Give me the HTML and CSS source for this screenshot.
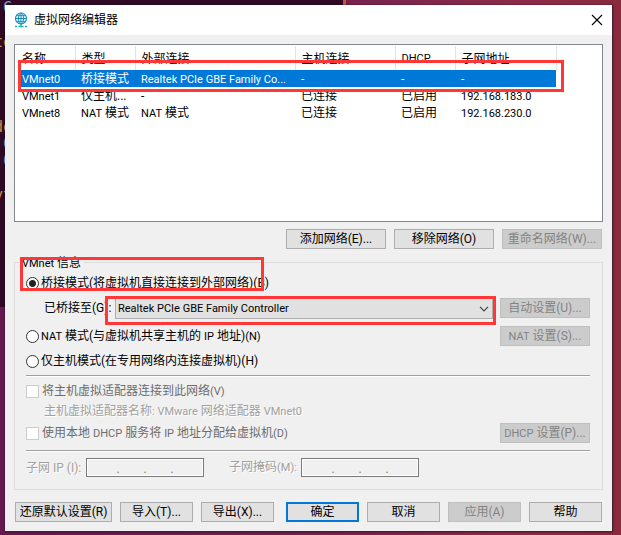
FILE: index.html
```html
<!DOCTYPE html>
<html lang="zh-CN">
<head>
<meta charset="utf-8">
<title>虚拟网络编辑器</title>
<link rel="stylesheet" href="styles.css">
</head>
<body>
<div class="terminal" aria-hidden="true"><pre> <b>C</b>

<i>te</i>


<i> )</i>

<i>de</i>
 <b>C</b>
 <b>C</b>

<i>y</i><b>t</b></pre></div>
<main class="dialog">
  <header class="titlebar">
    <svg class="globe" width="14" height="16" viewBox="0 0 14 16" fill="none" stroke="#1590bd">
      <circle cx="7" cy="6.5" r="5.5" stroke-width="1.2"/>
      <ellipse cx="7" cy="6.5" rx="2.6" ry="5.5"/>
      <path d="M1.5 6.5h11M2.4 3.7h9.2M2.4 9.3h9.2M7 1v13"/>
      <path d="M1 14.5h2M4.500 14.500h5M11 14.500h2" stroke="#16b79b" stroke-width="1.400"/>
    </svg>
    <h1>虚拟网络编辑器</h1>
    <button class="close" aria-label="关闭"><svg width="12" height="12" viewBox="0 0 12 12" stroke="#000" stroke-width="1.100"><path d="M1 1l10 10M11 1L1 11"/></svg></button>
  </header>
  <div class="content">
    <div class="list">
      <table>
        <colgroup><col class="c-name"><col class="c-type"><col class="c-ext"><col class="c-host"><col class="c-dhcp"><col class="c-addr"></colgroup>
        <thead><tr><th>名称</th><th>类型</th><th>外部连接</th><th>主机连接</th><th><span class="en">DHCP</span></th><th>子网地址</th></tr></thead>
        <tbody>
          <tr class="selected"><td><span class="en">VMnet0</span></td><td>桥接模式</td><td><span class="en">Realtek PCIe GBE Family Co...</span></td><td>-</td><td>-</td><td>-</td></tr>
          <tr><td><span class="en">VMnet1</span></td><td>仅主机...</td><td>-</td><td>已连接</td><td>已启用</td><td><span class="en">192.168.183.0</span></td></tr>
          <tr><td><span class="en">VMnet8</span></td><td><span class="en">NAT</span> 模式</td><td><span class="en">NAT</span> 模式</td><td>已连接</td><td>已启用</td><td><span class="en">192.168.230.0</span></td></tr>
        </tbody>
      </table>
      <div class="mark mark-row"></div>
    </div>
    <div class="list-actions">
      <button>添加网络(E)...</button>
      <button>移除网络(O)</button>
      <button disabled>重命名网络(W)...</button>
    </div>
    <fieldset>
      <legend><span class="en">VMnet</span> 信息</legend>
      <label class="row bridged"><input type="radio" name="mode" checked><span>桥接模式(将虚拟机直接连接到外部网络)(B)</span></label>
      <div class="row adapter">
        <label for="adapter">已桥接至(G):</label>
        <div class="select-box">
          <select id="adapter"><option>Realtek PCIe GBE Family Controller</option></select>
          <svg class="chevron" width="10" height="6" viewBox="0 0 10 6" fill="none" stroke="#444" stroke-width="1.200"><path d="M1 .8l4 4 4-4"/></svg>
          <div class="mark mark-select"></div>
        </div>
        <button class="side" disabled>自动设置(U)...</button>
      </div>
      <div class="row nat">
        <label><input type="radio" name="mode"><span><span class="en">NAT</span> 模式(与虚拟机共享主机的 <span class="en">IP</span> 地址)<span class="en">(N)</span></span></label>
        <button class="side" disabled><span class="en">NAT</span> 设置(S)...</button>
      </div>
      <label class="row host"><input type="radio" name="mode"><span>仅主机模式(在专用网络内连接虚拟机)(H)</span></label>
      <hr>
      <label class="row dim"><input type="checkbox" disabled><span>将主机虚拟适配器连接到此网络<span class="en">(V)</span></span></label>
      <p class="row faint note"><span>主机虚拟适配器名称<span class="en">: VMware</span> 网络适配器 <span class="en">VMnet0</span></span></p>
      <div class="row dhcp">
        <label class="dim"><input type="checkbox" disabled><span>使用本地 <span class="en">DHCP</span> 服务将 <span class="en">IP</span> 地址分配给虚拟机<span class="en">(D)</span></span></label>
        <button class="side" disabled><span class="en">DHCP</span> 设置(P)...</button>
      </div>
      <hr class="second">
      <div class="ip-row faint">
        <label for="subnet">子网 IP (I):</label>
        <input id="subnet" type="text" value=".        .        ." disabled>
        <label class="mask-label" for="mask">子网掩码<span class="en">(M):</span></label>
        <input id="mask" type="text" value=".        .        ." disabled>
      </div>
      <div class="mark mark-mode"></div>
    </fieldset>
    <footer>
      <button class="wide">还原默认设置(R)</button>
      <button>导入(T)...</button>
      <button>导出(X)...</button>
      <button class="primary">确定</button>
      <button>取消</button>
      <button disabled>应用(A)</button>
      <button>帮助</button>
    </footer>
  </div>
</main>
</body>
</html>
```
FILE: styles.css
```css
* { box-sizing: border-box; }
html, body { height: 100%; }
body {
  margin: 0;
  padding: 5px 8px 3px 5px;
  overflow: hidden;
  position: relative;
  background: linear-gradient(90deg, #65194f 0%, #6f2050 45%, #8d2c48 85%, #8b293f 100%);
  color: #000;
  font: 12px/16px Roboto, "Noto Sans CJK SC", sans-serif;
}
button, input, select { font: inherit; color: inherit; margin: 0; }
.en { font-size: 11px; }

.terminal {
  position: absolute;
  left: 0;
  top: 0;
  width: 346px;
  height: 307px;
  background: #300a24;
  border-right: 3px solid #bd5a3c;
  overflow: hidden;
}
.terminal pre {
  margin: 0 0 0 -6px;
  color: #cfc8d4;
  font: 15px/17px "DejaVu Sans Mono", monospace;
}
.terminal b { color: #7ea2d6; font-weight: normal; }
.terminal i { color: #d08848; font-style: normal; }

.dialog {
  position: relative;
  display: flex;
  flex-direction: column;
  min-height: 100%;
  background: #f0f0f0;
  border-right: 1px solid #45202f;
  border-bottom: 1px solid #45202f;
  box-shadow: 0 0 2px #00000080;
}
.titlebar {
  display: flex;
  align-items: center;
  height: 30px;
  padding: 0 9px;
  background: #fff;
}
.titlebar h1 {
  flex: 1;
  margin: 0 0 0 6px;
  font-size: 12px;
  font-weight: normal;
}
.close {
  display: flex;
  align-items: center;
  padding: 0;
  border: 0;
  background: none;
}
.content {
  flex: 1;
  display: flex;
  flex-direction: column;
  padding: 9px;
}

.list {
  position: relative;
  flex: 1;
  border: 1px solid #828790;
  background: #fff;
}
table {
  table-layout: fixed;
  width: 536px;
  margin: 1px 0 0 5px;
  border-collapse: collapse;
}
.c-name { width: 55px; }
.c-type { width: 60px; }
.c-ext { width: 160px; }
.c-host { width: 100px; }
.c-dhcp { width: 60px; }
.c-addr { width: 101px; }
th, td {
  padding: 1px 0 0 6px;
  font-weight: normal;
  text-align: left;
  white-space: nowrap;
  overflow: hidden;
}
th { height: 24px; padding-top: 1px; border-right: 1px solid #e2e2e2; }
td { height: 17px; line-height: 15px; }
th:first-child, td:first-child { padding-left: 2px; }
.selected { background: #0078d7; color: #fff; }

.mark {
  position: absolute;
  border: 3px solid #ff3737;
  pointer-events: none;
}
.mark-row { left: 3px; top: 15px; width: 546px; height: 32px; }
.mark-mode { left: 5px; top: -13px; width: 244px; height: 34px; }
.mark-select { left: -10px; right: -3px; top: -2px; height: 29px; }

button {
  height: 20px;
  padding: 0;
  border: 1px solid #adadad;
  border-radius: 0;
  background: #e1e1e1;
  line-height: 16px;
  white-space: nowrap;
}
button:disabled {
  border-color: #bfbfbf;
  background: #ccc;
  color: #838383;
}
.list-actions {
  display: flex;
  justify-content: flex-end;
  gap: 8px;
  margin: 7px 1px 5px 0;
}
.list-actions button { width: 100px; }

fieldset {
  position: relative;
  margin: 0;
  padding: 3px 12px 12px 11px;
  border: 1px solid #dcdcdc;
  min-width: 0;
}
legend {
  height: 16px;
  margin-left: -5px;
  padding: 1px 3px 0 1px;
}
.row { display: flex; align-items: center; height: 20px; }
.row label { display: flex; align-items: center; flex: 1; }
.side { width: 90px; }
input[type="radio"], input[type="checkbox"] {
  appearance: none;
  flex: none;
  width: 13px;
  height: 13px;
  margin-right: 2px;
  border: 1px solid #333;
  background: #fff;
}
input[type="radio"] { border-radius: 50%; }
input[type="radio"]:checked { background: radial-gradient(circle, #222 0 3px, #fff 4px); }
input[type="checkbox"] { margin-right: 3px; border-color: #ccc; }

.adapter { margin: 5px 0 8px; padding-left: 18px; }
.row.adapter label { flex: 0 0 71px; }
.select-box { position: relative; flex: 1; margin-right: 7px; }
select {
  appearance: none;
  display: block;
  width: 100%;
  height: 21px;
  padding: 2px 20px 0 2px;
  border: 1px solid #adadad;
  border-radius: 0;
  background: #e1e1e1;
  font-size: 11px;
}
.chevron { position: absolute; right: 4px; top: 8px; }
.host { margin: 5px 0 4px; }
hr {
  height: 2px;
  margin: 0 0 4px;
  border: 0;
  border-top: 1px solid #a0a0a0;
  border-bottom: 1px solid #fff;
}
.dim { color: #6d6d6d; }
.faint { color: #a0a0a0; text-shadow: 1px 1px #fff; }
.note { margin: 0 0 2px; padding-left: 18px; }
.second { margin: 7px 0 6px; }
.ip-row {
  display: grid;
  grid-template-columns: 60px 118px 97px 118px;
  align-items: center;
}
.mask-label { padding-left: 25px; }
.ip-row input {
  width: 118px;
  height: 19px;
  padding: 2px 0 0;
  border: 1px solid #7a7a7a;
  border-radius: 0;
  outline: 1px solid #fff;
  outline-offset: -2px;
  background: #f0f0f0;
  color: #777;
  text-align: center;
  white-space: pre;
}
footer { display: flex; gap: 8px; margin: 12px 1px 0; }
footer button { flex: 1 1 73px; }
footer .wide { flex-grow: 0; flex-basis: 97px; }
footer .primary { margin-left: 4px; border: 2px solid #0078d7; }
```
